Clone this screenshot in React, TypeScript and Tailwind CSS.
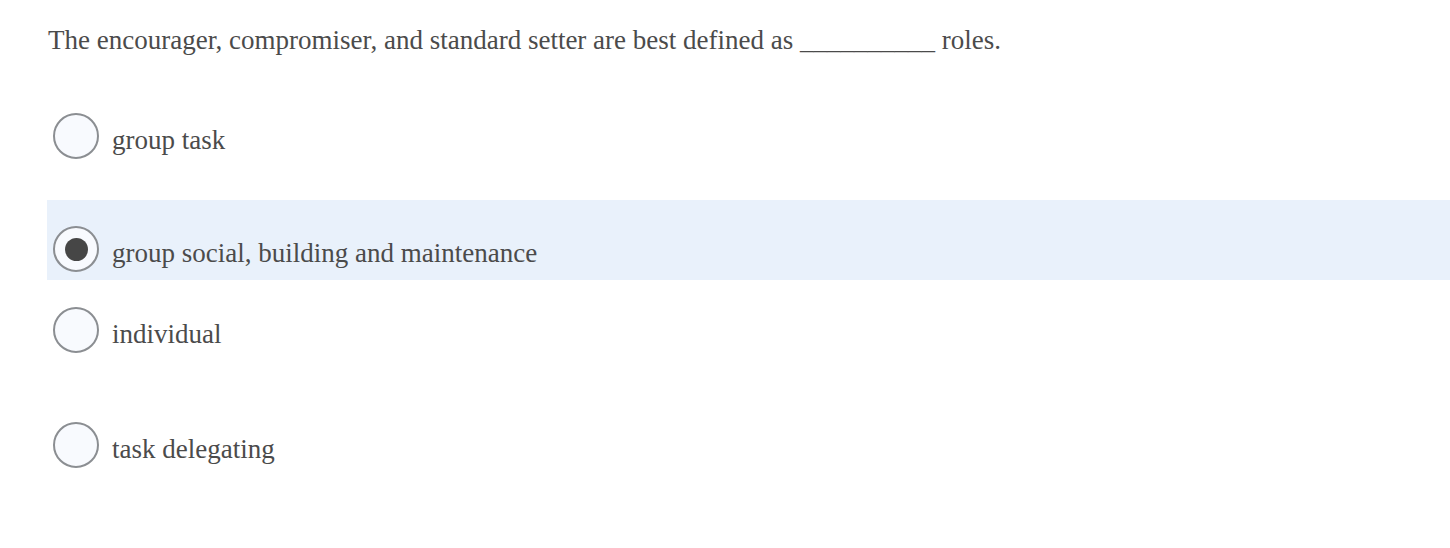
const options = [
  { label: 'group task', selected: false },
  { label: 'group social, building and maintenance', selected: true },
  { label: 'individual', selected: false },
  { label: 'task delegating', selected: false },
]

function Radio({ checked }: { checked: boolean }) {
  return (
    <span className="flex h-[46px] w-[46px] shrink-0 items-center justify-center rounded-full border-2 border-[#8b8e92] bg-[#f8fafe]">
      {checked && <span className="h-[23px] w-[23px] rounded-full bg-[#464646]" />}
    </span>
  )
}

function Option({ label, selected }: { label: string; selected: boolean }) {
  return (
    <div className="flex items-center gap-[13px]">
      <Radio checked={selected} />
      <span className="mt-[8px] text-[#4b4b4b]">{label}</span>
    </div>
  )
}

export default function App() {
  return (
    <div
      className="min-h-[548px] w-full bg-white text-[27px] leading-[32px]"
      style={{ fontFamily: '"Liberation Serif", "Times New Roman", serif' }}
    >
      <p className="pl-[48px] pt-[24px] text-[#4b4b4b]">
        The encourager, compromiser, and standard setter are best defined as{' '}
        <span>__________</span> roles.
      </p>

      <div className="mt-[57px] flex flex-col">
        <div className="pl-[53px]">
          <Option {...options[0]} />
        </div>

        <div className="ml-[47px] mt-[41px] bg-[#e9f1fb] pb-[8px] pl-[6px] pt-[26px]">
          <Option {...options[1]} />
        </div>

        <div className="mt-[27px] pl-[53px]">
          <Option {...options[2]} />
        </div>

        <div className="mt-[69px] pl-[53px]">
          <Option {...options[3]} />
        </div>
      </div>
    </div>
  )
}
